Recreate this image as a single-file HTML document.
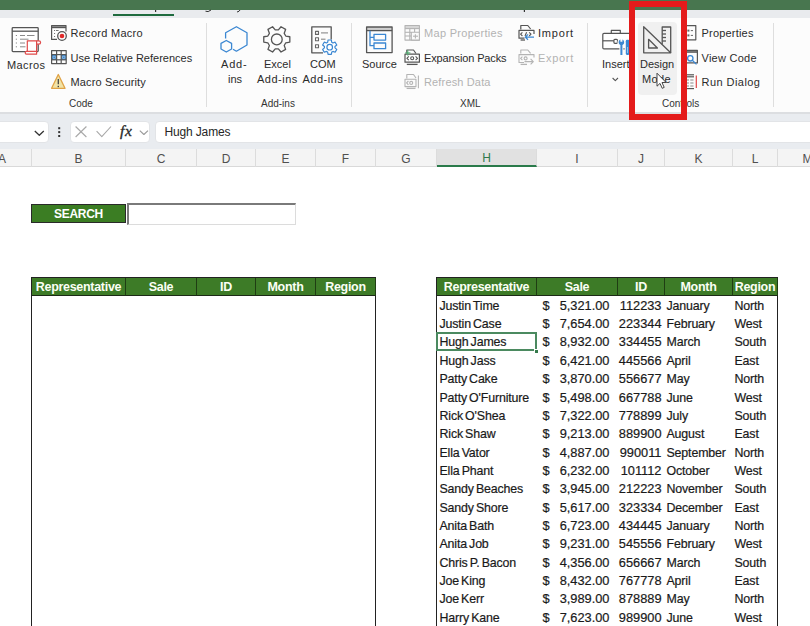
<!DOCTYPE html>
<html><head><meta charset="utf-8">
<style>
*{margin:0;padding:0;box-sizing:border-box}
html,body{width:810px;height:626px;overflow:hidden;background:#fff;font-family:"Liberation Sans",sans-serif;color:#262626}
.a{position:absolute;white-space:nowrap}
#title{left:0;top:0;width:810px;height:10px;background:#48764f}
#tabs{left:0;top:10px;width:810px;height:8px;background:#e9ebee}
#ribbon{left:0;top:18px;width:810px;height:95px;background:#fcfcfc}
#rbshadow{left:0;top:112px;width:810px;height:2px;background:#dcdee1}
#fbar{left:0;top:114px;width:810px;height:35px;background:#e9ecf0}
.rt{font-size:11px;color:#2b2b2b;line-height:13px}
.dis{color:#b3b3b3}
.gl{font-size:10px;color:#333;line-height:13px}
.sep{width:1px;background:#dedede}
.box{background:#fff;border:1px solid #e2e4e7;border-radius:4px}
#colhdr{left:0;top:149px;width:810px;height:18px;background:#f4f4f4;border-bottom:1px solid #d9d9d9}
.ch{position:absolute;top:0;height:18px;border-right:1px solid #dcdcdc;font-size:12px;line-height:20px;text-align:center;color:#505050}
.th{position:absolute;height:18.6px;background:#3d7b27;color:#fbfff5;font-weight:bold;font-size:12.5px;line-height:18.5px;text-align:center;border-right:1px solid #1f3d13;border-bottom:1px solid #1c2a16;letter-spacing:-0.3px;padding-left:0}
.td{position:absolute;font-size:12.8px;line-height:18px;color:#1a1a1a;white-space:nowrap;-webkit-text-stroke:0.2px #1a1a1a}
.tn{font-size:12.4px;letter-spacing:-0.15px;word-spacing:-1.2px}
.tr{text-align:right}
.tb{border:1px solid #222}
</style></head><body>
<div id="title" class="a"></div>
<div id="tabs" class="a"></div>
<div class="a" style="left:113px;top:14px;width:61px;height:2px;background:#1f6b3f"></div>
<div id="ribbon" class="a"></div>
<div id="rbshadow" class="a"></div>
<div id="fbar" class="a"></div>

<!-- Code group -->
<div class="a rt" style="left:7px;top:59px;letter-spacing:0.4px">Macros</div>
<div class="a rt" style="left:70.5px;top:27px;letter-spacing:0.28px">Record Macro</div>
<div class="a rt" style="left:70.5px;top:52px">Use Relative References</div>
<div class="a rt" style="left:70.5px;top:76px;letter-spacing:0.15px">Macro Security</div>
<div class="a gl" style="left:69px;top:97px">Code</div>
<div class="a sep" style="left:206px;top:23px;height:84px"></div>

<!-- Add-ins group -->
<div class="a rt" style="left:221px;top:58px;letter-spacing:0.8px">Add-</div>
<div class="a rt" style="left:228px;top:73px">ins</div>
<div class="a rt" style="left:264px;top:58px">Excel</div>
<div class="a rt" style="left:257px;top:73px;letter-spacing:0.5px">Add-ins</div>
<div class="a rt" style="left:310px;top:58px">COM</div>
<div class="a rt" style="left:302.5px;top:73px;letter-spacing:0.5px">Add-ins</div>
<div class="a gl" style="left:261px;top:97px">Add-ins</div>
<div class="a sep" style="left:351px;top:23px;height:84px"></div>

<!-- XML group -->
<div class="a rt" style="left:362px;top:58px">Source</div>
<div class="a rt dis" style="left:424px;top:27px;letter-spacing:0.3px">Map Properties</div>
<div class="a rt" style="left:424px;top:52px;letter-spacing:-0.13px">Expansion Packs</div>
<div class="a rt dis" style="left:424px;top:76px;letter-spacing:0.15px">Refresh Data</div>
<div class="a rt" style="left:538px;top:27px;letter-spacing:0.8px">Import</div>
<div class="a rt dis" style="left:538px;top:52px;letter-spacing:0.7px">Export</div>
<div class="a gl" style="left:460px;top:97px">XML</div>
<div class="a sep" style="left:587px;top:23px;height:84px"></div>

<!-- Controls group -->
<div class="a rt" style="left:602px;top:58px">Insert</div>
<div class="a" style="left:638px;top:22px;width:39px;height:72.5px;background:#f0f0f0;border-radius:4px"></div>
<div class="a rt" style="left:640px;top:58px">Design</div>
<div class="a rt" style="left:642px;top:73px;letter-spacing:0.4px">Mode</div>
<div class="a rt" style="left:701.5px;top:27px;letter-spacing:0.2px">Properties</div>
<div class="a rt" style="left:701.5px;top:52px;letter-spacing:0.25px">View Code</div>
<div class="a rt" style="left:701.5px;top:76px;letter-spacing:0.45px">Run Dialog</div>
<div class="a gl" style="left:662px;top:97px">Controls</div>
<div class="a sep" style="left:773px;top:23px;height:84px"></div>

<!-- formula bar -->
<!-- FB -->
<div class="a box" style="left:-5px;top:121px;width:54px;height:22px"></div>
<div class="a box" style="left:70px;top:121px;width:80px;height:22px"></div>
<div class="a box" style="left:155px;top:121px;width:660px;height:22px"></div>
<div class="a" style="left:164.5px;top:125px;font-size:12px;line-height:14px;color:#262626;letter-spacing:-0.15px">Hugh James</div>

<!-- column headers -->
<div id="colhdr" class="a">
<div class="ch" style="left:-27px;width:59px">A</div>
<div class="ch" style="left:32px;width:94px">B</div>
<div class="ch" style="left:126px;width:71px">C</div>
<div class="ch" style="left:197px;width:59px">D</div>
<div class="ch" style="left:256px;width:60px">E</div>
<div class="ch" style="left:316px;width:60px">F</div>
<div class="ch" style="left:376px;width:61px">G</div>
<div class="ch" style="left:437px;width:100px;background:#e1e1e1;color:#2f7a4c;border-bottom:2px solid #2a7a4a;line-height:19px">H</div>
<div class="ch" style="left:537px;width:81px">I</div>
<div class="ch" style="left:618px;width:47px">J</div>
<div class="ch" style="left:665px;width:68px">K</div>
<div class="ch" style="left:733px;width:45px">L</div>
<div class="ch" style="left:778px;width:60px">M</div>
</div>

<!-- SEARCH -->
<div class="a" style="left:31px;top:204px;width:95px;height:18.5px;background:#3b7d23;border:1px solid #2a2a2a;color:#fff;font-weight:bold;font-size:12px;line-height:18px;text-align:center;letter-spacing:-0.3px">SEARCH</div>
<div class="a" style="left:127px;top:203px;width:169px;height:22px;background:#fff;border-top:2px solid #7a7a7a;border-left:2px solid #7a7a7a;border-right:1px solid #dcdcdc;border-bottom:1px solid #dcdcdc"></div>

<!-- TABLES -->
<div class="a tb" style="left:31px;top:277px;width:345px;height:360px"></div>
<div class="th" style="left:32px;top:277.5px;width:94px">Representative</div>
<div class="th" style="left:126px;top:277.5px;width:71px">Sale</div>
<div class="th" style="left:197px;top:277.5px;width:59px">ID</div>
<div class="th" style="left:256px;top:277.5px;width:60px">Month</div>
<div class="th" style="left:316px;top:277.5px;width:60px">Region</div>

<div class="a tb" style="left:436px;top:277px;width:342px;height:360px"></div>
<div class="th" style="left:437px;top:277.5px;width:100px">Representative</div>
<div class="th" style="left:537px;top:277.5px;width:81px">Sale</div>
<div class="th" style="left:618px;top:277.5px;width:47px">ID</div>
<div class="th" style="left:665px;top:277.5px;width:68px">Month</div>
<div class="th" style="left:733px;top:277.5px;width:45px">Region</div>

<div class="td tn" style="left:439.5px;top:296.7px">Justin Time</div><div class="td" style="left:542.5px;top:296.7px">$</div><div class="td tr" style="left:550px;width:59.5px;top:296.7px">5,321.00</div><div class="td tr" style="left:617px;width:44.5px;top:296.7px">112233</div><div class="td tn" style="left:666.5px;top:296.7px">January</div><div class="td tn" style="left:734.5px;top:296.7px">North</div>
<div class="td tn" style="left:439.5px;top:315.06px">Justin Case</div><div class="td" style="left:542.5px;top:315.06px">$</div><div class="td tr" style="left:550px;width:59.5px;top:315.06px">7,654.00</div><div class="td tr" style="left:617px;width:44.5px;top:315.06px">223344</div><div class="td tn" style="left:666.5px;top:315.06px">February</div><div class="td tn" style="left:734.5px;top:315.06px">West</div>
<div class="td tn" style="left:439.5px;top:333.42px">Hugh James</div><div class="td" style="left:542.5px;top:333.42px">$</div><div class="td tr" style="left:550px;width:59.5px;top:333.42px">8,932.00</div><div class="td tr" style="left:617px;width:44.5px;top:333.42px">334455</div><div class="td tn" style="left:666.5px;top:333.42px">March</div><div class="td tn" style="left:734.5px;top:333.42px">South</div>
<div class="td tn" style="left:439.5px;top:351.78px">Hugh Jass</div><div class="td" style="left:542.5px;top:351.78px">$</div><div class="td tr" style="left:550px;width:59.5px;top:351.78px">6,421.00</div><div class="td tr" style="left:617px;width:44.5px;top:351.78px">445566</div><div class="td tn" style="left:666.5px;top:351.78px">April</div><div class="td tn" style="left:734.5px;top:351.78px">East</div>
<div class="td tn" style="left:439.5px;top:370.14px">Patty Cake</div><div class="td" style="left:542.5px;top:370.14px">$</div><div class="td tr" style="left:550px;width:59.5px;top:370.14px">3,870.00</div><div class="td tr" style="left:617px;width:44.5px;top:370.14px">556677</div><div class="td tn" style="left:666.5px;top:370.14px">May</div><div class="td tn" style="left:734.5px;top:370.14px">North</div>
<div class="td tn" style="left:439.5px;top:388.5px">Patty O'Furniture</div><div class="td" style="left:542.5px;top:388.5px">$</div><div class="td tr" style="left:550px;width:59.5px;top:388.5px">5,498.00</div><div class="td tr" style="left:617px;width:44.5px;top:388.5px">667788</div><div class="td tn" style="left:666.5px;top:388.5px">June</div><div class="td tn" style="left:734.5px;top:388.5px">West</div>
<div class="td tn" style="left:439.5px;top:406.86px">Rick O'Shea</div><div class="td" style="left:542.5px;top:406.86px">$</div><div class="td tr" style="left:550px;width:59.5px;top:406.86px">7,322.00</div><div class="td tr" style="left:617px;width:44.5px;top:406.86px">778899</div><div class="td tn" style="left:666.5px;top:406.86px">July</div><div class="td tn" style="left:734.5px;top:406.86px">South</div>
<div class="td tn" style="left:439.5px;top:425.22px">Rick Shaw</div><div class="td" style="left:542.5px;top:425.22px">$</div><div class="td tr" style="left:550px;width:59.5px;top:425.22px">9,213.00</div><div class="td tr" style="left:617px;width:44.5px;top:425.22px">889900</div><div class="td tn" style="left:666.5px;top:425.22px">August</div><div class="td tn" style="left:734.5px;top:425.22px">East</div>
<div class="td tn" style="left:439.5px;top:443.58px">Ella Vator</div><div class="td" style="left:542.5px;top:443.58px">$</div><div class="td tr" style="left:550px;width:59.5px;top:443.58px">4,887.00</div><div class="td tr" style="left:617px;width:44.5px;top:443.58px">990011</div><div class="td tn" style="left:666.5px;top:443.58px">September</div><div class="td tn" style="left:734.5px;top:443.58px">North</div>
<div class="td tn" style="left:439.5px;top:461.94px">Ella Phant</div><div class="td" style="left:542.5px;top:461.94px">$</div><div class="td tr" style="left:550px;width:59.5px;top:461.94px">6,232.00</div><div class="td tr" style="left:617px;width:44.5px;top:461.94px">101112</div><div class="td tn" style="left:666.5px;top:461.94px">October</div><div class="td tn" style="left:734.5px;top:461.94px">West</div>
<div class="td tn" style="left:439.5px;top:480.3px">Sandy Beaches</div><div class="td" style="left:542.5px;top:480.3px">$</div><div class="td tr" style="left:550px;width:59.5px;top:480.3px">3,945.00</div><div class="td tr" style="left:617px;width:44.5px;top:480.3px">212223</div><div class="td tn" style="left:666.5px;top:480.3px">November</div><div class="td tn" style="left:734.5px;top:480.3px">South</div>
<div class="td tn" style="left:439.5px;top:498.66px">Sandy Shore</div><div class="td" style="left:542.5px;top:498.66px">$</div><div class="td tr" style="left:550px;width:59.5px;top:498.66px">5,617.00</div><div class="td tr" style="left:617px;width:44.5px;top:498.66px">323334</div><div class="td tn" style="left:666.5px;top:498.66px">December</div><div class="td tn" style="left:734.5px;top:498.66px">East</div>
<div class="td tn" style="left:439.5px;top:517.02px">Anita Bath</div><div class="td" style="left:542.5px;top:517.02px">$</div><div class="td tr" style="left:550px;width:59.5px;top:517.02px">6,723.00</div><div class="td tr" style="left:617px;width:44.5px;top:517.02px">434445</div><div class="td tn" style="left:666.5px;top:517.02px">January</div><div class="td tn" style="left:734.5px;top:517.02px">North</div>
<div class="td tn" style="left:439.5px;top:535.38px">Anita Job</div><div class="td" style="left:542.5px;top:535.38px">$</div><div class="td tr" style="left:550px;width:59.5px;top:535.38px">9,231.00</div><div class="td tr" style="left:617px;width:44.5px;top:535.38px">545556</div><div class="td tn" style="left:666.5px;top:535.38px">February</div><div class="td tn" style="left:734.5px;top:535.38px">West</div>
<div class="td tn" style="left:439.5px;top:553.74px">Chris P. Bacon</div><div class="td" style="left:542.5px;top:553.74px">$</div><div class="td tr" style="left:550px;width:59.5px;top:553.74px">4,356.00</div><div class="td tr" style="left:617px;width:44.5px;top:553.74px">656667</div><div class="td tn" style="left:666.5px;top:553.74px">March</div><div class="td tn" style="left:734.5px;top:553.74px">South</div>
<div class="td tn" style="left:439.5px;top:572.1px">Joe King</div><div class="td" style="left:542.5px;top:572.1px">$</div><div class="td tr" style="left:550px;width:59.5px;top:572.1px">8,432.00</div><div class="td tr" style="left:617px;width:44.5px;top:572.1px">767778</div><div class="td tn" style="left:666.5px;top:572.1px">April</div><div class="td tn" style="left:734.5px;top:572.1px">East</div>
<div class="td tn" style="left:439.5px;top:590.46px">Joe Kerr</div><div class="td" style="left:542.5px;top:590.46px">$</div><div class="td tr" style="left:550px;width:59.5px;top:590.46px">3,989.00</div><div class="td tr" style="left:617px;width:44.5px;top:590.46px">878889</div><div class="td tn" style="left:666.5px;top:590.46px">May</div><div class="td tn" style="left:734.5px;top:590.46px">North</div>
<div class="td tn" style="left:439.5px;top:608.82px">Harry Kane</div><div class="td" style="left:542.5px;top:608.82px">$</div><div class="td tr" style="left:550px;width:59.5px;top:608.82px">7,623.00</div><div class="td tr" style="left:617px;width:44.5px;top:608.82px">989900</div><div class="td tn" style="left:666.5px;top:608.82px">June</div><div class="td tn" style="left:734.5px;top:608.82px">West</div>
<!-- /TABLES -->
<!-- ICONS -->
<svg class="a" style="left:0;top:0" width="810" height="150" viewBox="0 0 810 150" fill="none" stroke-linejoin="round">
<g stroke="#555" stroke-width="1.3"><rect x="12.2" y="27.6" width="26" height="24" rx="0.8" fill="#fff"/><line x1="12.2" y1="31.2" x2="38.2" y2="31.2"/></g>
<g stroke="#8a8a8a" stroke-width="1"><line x1="15.8" y1="35.5" x2="17" y2="35.5"/><line x1="20" y1="35.5" x2="25" y2="35.5"/><line x1="27" y1="35.5" x2="34.5" y2="35.5"/><line x1="15.8" y1="39.2" x2="17" y2="39.2"/><line x1="20" y1="39.2" x2="28.5" y2="39.2"/><line x1="15.8" y1="43" x2="17" y2="43"/><line x1="20" y1="43" x2="25" y2="43"/><line x1="15.8" y1="46.8" x2="17" y2="46.8"/><line x1="20" y1="46.8" x2="25.5" y2="46.8"/></g>
<g stroke="#e04a4a" stroke-width="1.2" fill="#fff"><path d="M27.3,51.6 L27.3,40.8 L38.8,40.8 Q40.6,40.8 40.6,42.5 Q40.6,44.2 38.8,44.2 L36.6,44.2 L36.6,51.6 Z"/><line x1="36.6" y1="40.8" x2="36.6" y2="44.2"/><path d="M26.4,51.4 L36.6,51.4 L36.6,54.2 L26.4,54.2 Q25.2,54.2 25.2,52.8 Q25.2,51.4 26.4,51.4 Z"/></g>
<g stroke="#555" stroke-width="1.2"><path d="M57,39.4 L51.6,39.4 L51.6,25.6 L66,25.6 L66,31.5" fill="#fff"/><line x1="51.6" y1="27.3" x2="66" y2="27.3" stroke-width="1.8"/></g>
<g fill="#777"><rect x="54" y="30" width="1.1" height="1"/><rect x="56" y="30" width="2.6" height="1"/><rect x="54" y="33" width="1.1" height="1"/><rect x="54" y="36" width="1.1" height="1"/></g>
<circle cx="62" cy="36" r="4.3" fill="#fff" stroke="#555" stroke-width="1.3"/><circle cx="62" cy="36" r="2.3" fill="#e02b2b"/>
<rect x="51.6" y="54.5" width="5" height="5.4" fill="#2f7cc4"/><rect x="61.2" y="54.5" width="5" height="5.4" fill="#2f7cc4"/>
<g stroke="#555" stroke-width="1.2"><rect x="51.6" y="50.6" width="14.6" height="13"/><line x1="56.6" y1="50.6" x2="56.6" y2="63.6"/><line x1="61.2" y1="50.6" x2="61.2" y2="63.6"/><line x1="51.6" y1="54.6" x2="66.2" y2="54.6"/><line x1="51.6" y1="59.8" x2="66.2" y2="59.8"/></g>
<g stroke="#9cc3e8" stroke-width="0.8"><rect x="53" y="56.2" width="2.3" height="2.2"/><rect x="62.6" y="56.2" width="2.3" height="2.2"/></g>
<path d="M58.3,74.5 L65,88.3 L51.6,88.3 Z" fill="#f1e3a6" stroke="#e0a347" stroke-width="1.3"/>
<line x1="58.3" y1="79" x2="58.3" y2="84.3" stroke="#444" stroke-width="1.3"/><rect x="57.6" y="85.8" width="1.4" height="1.4" fill="#444"/>
<g stroke="#3b87d2" stroke-width="1.3"><path d="M225.6,38.6 L225.6,32.7 L236.4,26.7 L247,32.7 L247,45 L236.4,51.2 L233,49.3"/><path d="M226.3,40.5 L231.6,43.4 L231.6,49 L226.3,52 L221,49 L221,43.4 Z"/></g>
<g stroke="#555" stroke-width="1.3"><path d="M285.78,36.02 L289.83,36.76 L289.83,42.04 L285.78,42.78 L284.22,45.49 L285.61,49.37 L281.03,52.01 L278.36,48.87 L275.24,48.87 L272.57,52.01 L267.99,49.37 L269.38,45.49 L267.82,42.78 L263.77,42.04 L263.77,36.76 L267.82,36.02 L269.38,33.31 L267.99,29.43 L272.57,26.79 L275.24,29.93 L278.36,29.93 L281.03,26.79 L285.61,29.43 L284.22,33.31 Z"/><circle cx="276.8" cy="39.4" r="5.4"/></g>
<g stroke="#555" stroke-width="1.3"><path d="M331.2,39.5 L331.2,26.8 L311.8,26.8 L311.8,52.8 L323,52.8"/></g>
<g stroke="#666" stroke-width="1.1"><rect x="315.5" y="31.4" width="3" height="3"/><rect x="315.5" y="37.8" width="3" height="3"/><rect x="315.5" y="44.7" width="3" height="3"/><line x1="321" y1="32.9" x2="328" y2="32.9" stroke="#888"/><line x1="321" y1="39.2" x2="325.5" y2="39.2" stroke="#888"/></g>
<g stroke="#3b87d2" stroke-width="1.2" fill="#fff"><path d="M331.76,52.08 L331.31,54.42 L328.09,54.42 L327.64,52.08 L326.50,51.43 L324.25,52.21 L322.64,49.41 L324.44,47.85 L324.44,46.55 L322.64,44.99 L324.25,42.19 L326.50,42.97 L327.64,42.32 L328.09,39.98 L331.31,39.98 L331.76,42.32 L332.90,42.97 L335.15,42.19 L336.76,44.99 L334.96,46.55 L334.96,47.85 L336.76,49.41 L335.15,52.21 L332.90,51.43 Z"/><circle cx="329.7" cy="47.2" r="2.8"/></g>
<rect x="366.6" y="27" width="25.5" height="3.6" fill="#cfcfcf"/>
<g stroke="#555" stroke-width="1.3"><rect x="366.6" y="27" width="25.5" height="25.6"/><line x1="366.6" y1="30.6" x2="392.1" y2="30.6"/></g>
<g stroke="#3b87d2" stroke-width="1.3"><path d="M370,30.8 L370,45.7 L374,45.7 M370,37.3 L374,37.3"/><rect x="374" y="34.4" width="11.6" height="5.7"/><rect x="374" y="43" width="11.6" height="5.7"/></g>
<rect x="405" y="25.5" width="14.4" height="3" fill="#d6d6d6"/>
<g stroke="#b4b4b4" stroke-width="1.1"><rect x="405" y="25.5" width="14.4" height="14.6"/><line x1="405" y1="28.6" x2="419.4" y2="28.6"/><line x1="409.8" y1="28.6" x2="409.8" y2="40"/><line x1="405" y1="32.3" x2="411" y2="32.3"/><line x1="405" y1="36" x2="411" y2="36"/><line x1="414.6" y1="28.6" x2="414.6" y2="32"/><rect x="411.3" y="32.3" width="8.1" height="7.8" fill="#fafafa"/><line x1="415.4" y1="34.3" x2="415.4" y2="38.5"/><line x1="413" y1="36.2" x2="418" y2="36.2"/></g>
<g stroke="#555" stroke-width="1.2"><path d="M406.8,53.5 L406.8,50 L413.5,50 L416,53.5"/><rect x="405" y="54.2" width="14.4" height="8" fill="#fff"/><line x1="406.8" y1="64.4" x2="417.6" y2="64.4" stroke-width="1.3"/></g>
<g stroke="#555" stroke-width="1.1"><path d="M408.8,56.4 L406.9,58.3 L408.8,60.2 M415.6,56.4 L417.5,58.3 L415.6,60.2"/><circle cx="412.2" cy="58.3" r="1.5"/></g>
<g stroke="#4caf6e" stroke-width="1"><line x1="407.8" y1="50.2" x2="407.8" y2="55.6"/><line x1="405.2" y1="52.9" x2="410.4" y2="52.9"/></g>
<g stroke="#b4b4b4" stroke-width="1.1"><path d="M406.8,78.5 L406.8,74.5 L413.5,74.5 L416,78"/><rect x="405" y="79.2" width="11" height="7.4" fill="#fafafa"/><line x1="406.6" y1="88.4" x2="415.5" y2="88.4" stroke-width="1.3"/><line x1="418.4" y1="75.4" x2="418.4" y2="88.3"/></g>
<g stroke="#b4b4b4" stroke-width="1.1"><path d="M408.4,81 L406.6,82.9 L408.4,84.8"/><circle cx="411.2" cy="82.9" r="1.5"/></g>
<g stroke="#555" stroke-width="1.2"><path d="M520.8,29.5 L520.8,25.5 L527.8,25.5 L530.6,29"/><path d="M534,34 L534,30.4 L519,30.4 L519,38.2 L524.5,38.2" fill="none"/><line x1="520.6" y1="40" x2="525" y2="40" stroke-width="1.3"/></g>
<g stroke="#555" stroke-width="1.1"><path d="M522.4,32.4 L520.6,34.2 L522.4,36 M529.2,32.4 L531,34.2 L529.2,36 M526.6,32.2 L525,36"/></g>
<g stroke="#3b87d2" stroke-width="1.3"><path d="M534,37.1 L525.4,37.1 M528,34.4 L525.3,37.1 L528,39.8"/></g>
<g stroke="#b4b4b4" stroke-width="1.1"><path d="M520.8,53.5 L520.8,50 L527.8,50 L530.6,53.3"/><path d="M534,57.5 L534,54.6 L519,54.6 L519,62.5 L524,62.5"/><line x1="520.6" y1="64.4" x2="527" y2="64.4" stroke-width="1.3"/><path d="M524.5,61.6 L533.3,61.6 M530.6,58.9 L533.3,61.6 L530.6,64.3"/></g>
<g stroke="#b4b4b4" stroke-width="1.1"><path d="M522.4,56.6 L520.6,58.4 L522.4,60.2"/><circle cx="525.6" cy="58.4" r="1.5"/></g>
<g stroke="#555" stroke-width="1.2"><rect x="602.8" y="33.3" width="28" height="15.6" rx="1.2" fill="#fff"/><path d="M611.3,33.2 L611.3,30.4 L620.3,30.4 L620.3,33.2"/><line x1="602.8" y1="40.8" x2="613.8" y2="40.8"/><rect x="613.9" y="39.3" width="3.6" height="4" rx="1"/></g>
<g stroke="#fbfbfb" stroke-width="1.6" fill="#3b87d2"><path d="M618.2,42.2 A3.3,3.3 0 0 1 620.2,39.2 L620.2,41.6 L622.6,41.6 L622.6,39.2 A3.3,3.3 0 0 1 624.6,42.2 A3.3,3.3 0 0 1 622.6,45.2 L622.6,55.5 L620.2,55.5 L620.2,45.2 A3.3,3.3 0 0 1 618.2,42.2 Z"/><rect x="625.4" y="39.4" width="4.4" height="16" rx="1.6"/></g>
<g fill="#3b87d2"><path d="M618.6,42.2 A3,3 0 0 1 620.4,39.6 L620.4,41.8 L622.4,41.8 L622.4,39.6 A3,3 0 0 1 624.2,42.2 A3,3 0 0 1 622.4,44.9 L622.4,55 L620.4,55 L620.4,44.9 A3,3 0 0 1 618.6,42.2 Z"/><rect x="625.8" y="39.8" width="3.6" height="15.2" rx="1.4"/></g><line x1="627.6" y1="47" x2="627.6" y2="53" stroke="#bcd6f0" stroke-width="0.8"/>
<g stroke="#555" stroke-width="1.3"><path d="M643.7,26.7 L643.7,52.8 L670.7,52.8 Z"/><path d="M648.6,39.3 L657.4,48 L648.6,48 Z"/><path d="M662.2,44.3 L662.2,27 L670.7,27 L670.7,52.8"/><line x1="662.2" y1="30.5" x2="666" y2="30.5"/><line x1="662.2" y1="34" x2="666" y2="34"/><line x1="662.2" y1="37.5" x2="666" y2="37.5"/><line x1="662.2" y1="41" x2="666" y2="41"/></g>
<g stroke="#555" stroke-width="1.2"><rect x="684" y="25.6" width="11.8" height="14.2"/></g><g fill="#666"><rect x="687.4" y="29.6" width="2" height="2"/><rect x="687.4" y="34.4" width="2" height="2"/><rect x="690.8" y="30.1" width="2.2" height="1"/><rect x="690.8" y="34.9" width="2.2" height="1"/></g>
<g stroke="#555" stroke-width="1.2"><rect x="684" y="50.3" width="13.4" height="12.6"/><line x1="684" y1="52" x2="697.4" y2="52" stroke-width="1.6"/></g>
<g stroke="#3b87d2" stroke-width="1.3"><circle cx="690.3" cy="58.3" r="2.7" fill="#fff"/><line x1="692.3" y1="60.3" x2="696.5" y2="64.4"/></g>
<g stroke="#555" stroke-width="1.2"><line x1="684" y1="74.8" x2="694" y2="74.8"/><line x1="684" y1="76.8" x2="694" y2="76.8"/><line x1="684" y1="88.6" x2="694" y2="88.6"/></g>
<g stroke="#888" stroke-width="1"><line x1="686.5" y1="80" x2="689" y2="80"/><line x1="690.3" y1="80" x2="693.5" y2="80"/><line x1="686.5" y1="83" x2="689" y2="83"/><line x1="690.3" y1="83" x2="693.5" y2="83"/><line x1="686.5" y1="86" x2="689" y2="86"/><line x1="690.3" y1="86" x2="693.5" y2="86"/></g>
<line x1="696.3" y1="75.6" x2="696.3" y2="87.9" stroke="#e04848" stroke-width="1.2"/>
<path d="M612.6,78 L615.3,80.6 L618,78" stroke="#555" stroke-width="1.1"/>
<path d="M34.8,131 L39.3,135.2 L43.8,131" stroke="#333" stroke-width="1.3"/>
<g fill="#333"><rect x="58.2" y="127.2" width="2" height="2"/><rect x="58.2" y="131.1" width="2" height="2"/><rect x="58.2" y="135" width="2" height="2"/></g>
<g stroke="#a8a8a8" stroke-width="1.1"><line x1="75.6" y1="126.5" x2="86.4" y2="137"/><line x1="86.4" y1="126.5" x2="75.6" y2="137"/><path d="M96.6,131.2 L101.8,136.6 L111,126.5"/></g>
<path d="M139.8,130.6 L143.9,134.5 L148,130.6" stroke="#999" stroke-width="1.1"/>
<text x="120" y="135.6" font-family="Liberation Serif" font-size="15.5" font-style="italic" fill="#2a2a2a" stroke="#2a2a2a" stroke-width="0.35">f<tspan dx="0.8" font-size="15.5">x</tspan></text>
<g fill="#333"><rect x="155" y="10" width="1.2" height="2"/><path d="M205.5,11.2 Q208,12.6 211,10" stroke="#333" stroke-width="1" fill="none"/><path d="M237,12 Q239.5,11.5 240,10" stroke="#333" stroke-width="1" fill="none"/><rect x="523.8" y="10" width="1.2" height="2"/></g>
<path d="M657,73.2 L657,86.2 L660,83.4 L662.2,88.3 L664.2,87.4 L662,82.6 L666,82.4 Z" fill="#fff" stroke="#333" stroke-width="0.9"/>
</svg>
<!-- /ICONS -->
<div class="a" style="left:629px;top:1px;width:58px;height:118.5px;border:6px solid #e41b1b"></div>
<div class="a" style="left:435.5px;top:331.5px;width:101px;height:19.5px;border:2px solid #4b8a60"></div>
<div class="a" style="left:533.5px;top:348.5px;width:5px;height:5px;background:#357a4c;border:1px solid #fff"></div>
</body></html>
